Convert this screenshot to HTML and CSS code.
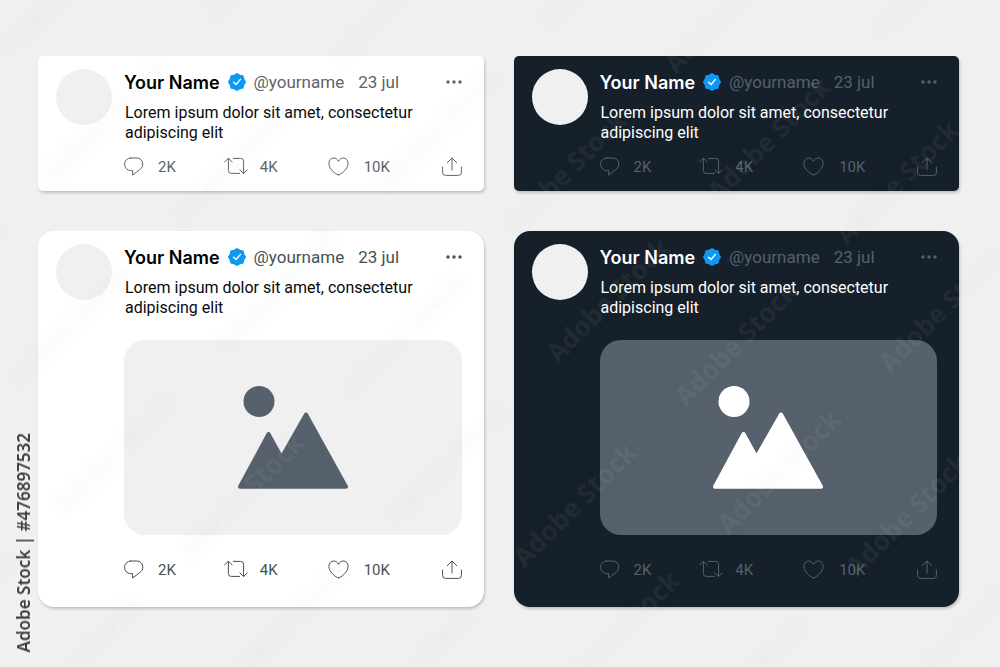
FILE: index.html
```html
<!DOCTYPE html>
<html lang="en">
<head>
<meta charset="utf-8">
<meta name="viewport" content="width=device-width, initial-scale=1">
<title>Post cards</title>
<link rel="stylesheet" href="styles.css">
</head>
<body>
<svg class="sprite" aria-hidden="true">
  <symbol id="badge" viewBox="0 0 18 18">
    <path class="badge-shape" d="M17 9 15.37 11.64 14.66 14.66 11.64 15.37 9 17 6.36 15.37 3.34 14.66 2.63 11.64 1 9 2.63 6.36 3.34 3.34 6.36 2.63 9 1 11.64 2.63 14.66 3.34 15.37 6.36Z"/>
    <path class="badge-tick" d="M5.6 9.2 8.1 11.5 12.4 6.4"/>
  </symbol>
  <symbol id="dots" viewBox="0 0 16 4">
    <circle cx="2" cy="2" r="1.7"/><circle cx="8" cy="2" r="1.7"/><circle cx="14" cy="2" r="1.7"/>
  </symbol>
  <symbol id="reply" viewBox="0 0 22 20">
    <path d="M6.7 1H12.8A6 6 0 0 1 18.8 7C18.8 9.6 17.6 11.4 15.6 12.7L8.6 18V13.6H6.7A6.2 6.2 0 0 1 .6 7.4V7A6 6 0 0 1 6.7 1Z"/>
  </symbol>
  <symbol id="repost" viewBox="0 0 24 20">
    <path d="M.6 5 4.4 1.2 8.2 5M4.4 1.4V13.6Q4.4 16.4 7.2 16.4H15.6M9.4 1.4H16.6Q19.6 1.4 19.6 4.2V16.4M15.8 12.8 19.6 16.6 23.4 12.8"/>
  </symbol>
  <symbol id="like" viewBox="0 0 24 20">
    <path d="M10.5 17.9C7.6 17.5.9 11.8.9 6.3.9 3.2 3 1 5.7 1 7.8 1 9.6 2.3 10.5 4.3 11.4 2.3 13.2 1 15.3 1 18 1 20.1 3.2 20.1 6.3 20.1 11.8 13.4 17.5 10.5 17.9Z"/>
  </symbol>
  <symbol id="share" viewBox="0 0 20 20">
    <path d="M10 13V1.2M5.2 5.8 10 1 14.8 5.8M.6 10V15.6Q.6 18.4 3.4 18.4H16.6Q19.4 18.4 19.4 15.6V10"/>
  </symbol>
  <symbol id="picture" viewBox="0 0 112 104">
    <circle cx="22" cy="15.5" r="15.5"/>
    <path class="peaks" d="M3 100.8 31.5 48 44.5 71.5 69 28.5 109 100.8Z"/>
  </symbol>
</svg>

<main class="board">
  <article class="card card-compact">
    <div class="avatar"></div>
    <div class="content">
      <header class="head">
        <strong class="name">Your Name</strong>
        <svg class="badge" role="img" aria-label="Verified"><use href="#badge"/></svg>
        <a class="handle" href="#">@yourname</a>
        <time class="date">23 jul</time>
        <button class="more" type="button" aria-label="More"><svg class="dots"><use href="#dots"/></svg></button>
      </header>
      <p class="text">Lorem ipsum dolor sit amet, consectetur adipiscing elit</p>
      <footer class="actions">
        <button class="action" type="button"><svg class="icon icon-reply"><use href="#reply"/></svg>2K</button>
        <button class="action" type="button"><svg class="icon"><use href="#repost"/></svg>4K</button>
        <button class="action" type="button"><svg class="icon"><use href="#like"/></svg>10K</button>
        <button class="action" type="button" aria-label="Share"><svg class="icon icon-share"><use href="#share"/></svg></button>
      </footer>
    </div>
  </article>

  <article class="card card-compact card-dark">
    <div class="avatar"></div>
    <div class="content">
      <header class="head">
        <strong class="name">Your Name</strong>
        <svg class="badge" role="img" aria-label="Verified"><use href="#badge"/></svg>
        <a class="handle" href="#">@yourname</a>
        <time class="date">23 jul</time>
        <button class="more" type="button" aria-label="More"><svg class="dots"><use href="#dots"/></svg></button>
      </header>
      <p class="text">Lorem ipsum dolor sit amet, consectetur adipiscing elit</p>
      <footer class="actions">
        <button class="action" type="button"><svg class="icon icon-reply"><use href="#reply"/></svg>2K</button>
        <button class="action" type="button"><svg class="icon"><use href="#repost"/></svg>4K</button>
        <button class="action" type="button"><svg class="icon"><use href="#like"/></svg>10K</button>
        <button class="action" type="button" aria-label="Share"><svg class="icon icon-share"><use href="#share"/></svg></button>
      </footer>
    </div>
  </article>

  <article class="card card-media">
    <div class="avatar"></div>
    <div class="content">
      <header class="head">
        <strong class="name">Your Name</strong>
        <svg class="badge" role="img" aria-label="Verified"><use href="#badge"/></svg>
        <a class="handle" href="#">@yourname</a>
        <time class="date">23 jul</time>
        <button class="more" type="button" aria-label="More"><svg class="dots"><use href="#dots"/></svg></button>
      </header>
      <p class="text">Lorem ipsum dolor sit amet, consectetur adipiscing elit</p>
      <div class="media"><svg class="picture" role="img" aria-label="Picture"><use href="#picture"/></svg></div>
      <footer class="actions">
        <button class="action" type="button"><svg class="icon icon-reply"><use href="#reply"/></svg>2K</button>
        <button class="action" type="button"><svg class="icon"><use href="#repost"/></svg>4K</button>
        <button class="action" type="button"><svg class="icon"><use href="#like"/></svg>10K</button>
        <button class="action" type="button" aria-label="Share"><svg class="icon icon-share"><use href="#share"/></svg></button>
      </footer>
    </div>
  </article>

  <article class="card card-media card-dark">
    <div class="avatar"></div>
    <div class="content">
      <header class="head">
        <strong class="name">Your Name</strong>
        <svg class="badge" role="img" aria-label="Verified"><use href="#badge"/></svg>
        <a class="handle" href="#">@yourname</a>
        <time class="date">23 jul</time>
        <button class="more" type="button" aria-label="More"><svg class="dots"><use href="#dots"/></svg></button>
      </header>
      <p class="text">Lorem ipsum dolor sit amet, consectetur adipiscing elit</p>
      <div class="media"><svg class="picture" role="img" aria-label="Picture"><use href="#picture"/></svg></div>
      <footer class="actions">
        <button class="action" type="button"><svg class="icon icon-reply"><use href="#reply"/></svg>2K</button>
        <button class="action" type="button"><svg class="icon"><use href="#repost"/></svg>4K</button>
        <button class="action" type="button"><svg class="icon"><use href="#like"/></svg>10K</button>
        <button class="action" type="button" aria-label="Share"><svg class="icon icon-share"><use href="#share"/></svg></button>
      </footer>
    </div>
  </article>
</main>

<svg class="watermark" aria-hidden="true">
  <defs>
    <pattern id="marks" width="228" height="242" patternUnits="userSpaceOnUse" patternTransform="rotate(-45) translate(-95 138)">
      <g class="mark">
        <text x="4" y="30">Adobe Stock</text>
        <text x="64" y="151">Adobe Stock</text>
      </g>
    </pattern>
  </defs>
  <rect width="100%" height="100%" fill="url(#marks)"/>
</svg>
<div class="credit">Adobe Stock | #476897532</div>
</body>
</html>
```
FILE: styles.css
```css
* {
  box-sizing: border-box;
}

body {
  margin: 0;
  min-height: 100vh;
  background: #f0f0f0;
  font-family: Roboto, "Liberation Sans", sans-serif;
}

button {
  padding: 0;
  border: 0;
  background: none;
  color: inherit;
  font: inherit;
}

.sprite {
  position: absolute;
  width: 0;
  height: 0;
}

.board {
  display: grid;
  grid-template-columns: 1fr 1fr;
  gap: 40px 30px;
  padding: 56px 41px 40px 38px;
}

.card {
  --muted: #606468;
  --action: #606468;
  --fill: #f0f0f0;
  --art: #56616d;
  display: flex;
  gap: 12px;
  padding: 13px 22px 14px 18px;
  border-radius: 5px;
  background: #fff;
  color: #0a0a0a;
  box-shadow: 1px 2px 3px rgba(0, 0, 0, 0.2);
}

.card-media {
  --muted: #465056;
  --action: #465056;
  padding-bottom: 27px;
  border-radius: 16px;
}

.card-dark {
  --muted: #55606b;
  --action: #55606b;
  --fill: #56616d;
  --art: #fff;
  background: #16202a;
  color: #fff;
}

.avatar {
  flex: none;
  width: 56px;
  height: 56px;
  border-radius: 50%;
  background: #f0f0f0;
}

.content {
  flex: 1;
  min-width: 0;
}

.head {
  display: flex;
  align-items: center;
  gap: 8px;
  height: 26px;
  color: var(--muted);
  font-size: 17px;
  white-space: nowrap;
}

.name {
  color: #000;
  font-family: Inter, "Liberation Sans", sans-serif;
  font-size: 18px;
  font-weight: 600;
}

.card-dark .name {
  color: #fff;
}

.badge {
  width: 18px;
  height: 18px;
}

.badge-shape {
  fill: #0d99f3;
  stroke: #0d99f3;
  stroke-width: 2;
  stroke-linejoin: round;
}

.badge-tick {
  fill: none;
  stroke: #fff;
  stroke-width: 1.4;
  stroke-linecap: round;
}

.handle {
  color: inherit;
  text-decoration: none;
}

.date {
  margin-left: 6px;
}

.more {
  display: flex;
  margin-left: auto;
}

.dots {
  width: 16px;
  height: 4px;
  fill: var(--muted);
}

.text {
  margin: 8px 0 0;
  padding-left: 1px;
  font-size: 16px;
  line-height: 20px;
}

.media {
  display: flex;
  align-items: center;
  justify-content: center;
  height: 195px;
  margin-top: 22px;
  border-radius: 21px;
  background: var(--fill);
}

.picture {
  width: 112px;
  height: 104px;
  fill: var(--art);
}

.peaks {
  stroke: var(--art);
  stroke-width: 4;
  stroke-linejoin: round;
}

.actions {
  display: grid;
  grid-template-columns: 100fr 104fr 114fr auto;
  margin-top: 14px;
  color: var(--action);
  font-size: 15px;
  line-height: 20px;
}

.card-media .actions {
  margin-top: 25px;
}

.action {
  display: flex;
  align-items: center;
  gap: 12px;
}

.icon {
  flex: none;
  width: 24px;
  height: 20px;
  fill: none;
  stroke: var(--action);
  stroke-linecap: round;
  stroke-linejoin: round;
}

.icon-reply {
  width: 22px;
}

.icon-share {
  width: 20px;
}

.watermark {
  position: fixed;
  inset: 0;
  width: 100%;
  height: 100%;
  pointer-events: none;
}

.mark {
  fill: #fff;
  fill-opacity: 0.05;
  font: 700 26px "Noto Sans", sans-serif;
  filter: drop-shadow(0 0 4px rgba(0, 0, 0, 0.6));
}

.credit {
  position: fixed;
  left: 12px;
  bottom: 14px;
  color: #3c3c3c;
  font: 600 17px/24px "Noto Sans", "Open Sans", sans-serif;
  text-shadow: 0 0 3px #fff;
  writing-mode: vertical-rl;
  transform: rotate(180deg);
}
```
